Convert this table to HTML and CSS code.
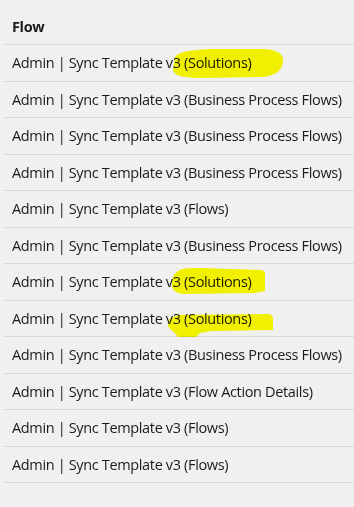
FILE: index.html
```html
<!DOCTYPE html>
<html lang="en">
<head>
<meta charset="utf-8">
<title>Flow</title>
<link rel="stylesheet" href="styles.css">
</head>
<body>
<div class="table">
  <div class="row head">Flow</div>
  <div class="row">Admin | Sync Template v3 (Solutions)</div>
  <div class="row">Admin | Sync Template v3 (Business Process Flows)</div>
  <div class="row">Admin | Sync Template v3 (Business Process Flows)</div>
  <div class="row">Admin | Sync Template v3 (Business Process Flows)</div>
  <div class="row">Admin | Sync Template v3 (Flows)</div>
  <div class="row">Admin | Sync Template v3 (Business Process Flows)</div>
  <div class="row">Admin | Sync Template v3 (Solutions)</div>
  <div class="row">Admin | Sync Template v3 (Solutions)</div>
  <div class="row">Admin | Sync Template v3 (Business Process Flows)</div>
  <div class="row">Admin | Sync Template v3 (Flow Action Details)</div>
  <div class="row">Admin | Sync Template v3 (Flows)</div>
  <div class="row">Admin | Sync Template v3 (Flows)</div>
</div>
<svg class="marks" width="354" height="507" viewBox="0 0 354 507" aria-hidden="true">
  <path d="M175,57 C178,52 190,50 210,49 L262,49 C275,49 283,53 283,60 C283,70 276,76 262,77 L200,78 C185,78 174,76 173,70 Z"/>
  <path d="M177,272 C180,268 190,268 200,268 L262,270 L265,272 L265,291 L255,293 L185,294 C176,294 171,290 172,283 C172,278 174,274 177,272 Z"/>
  <path d="M178,315 L270,314 L273,317 L273,330 L212,331 L200,333 L196,337 L178,337 C176,333 170,330 168,326 L169,319 Z"/>
</svg>
</body>
</html>
```
FILE: styles.css
```css
html, body {
  margin: 0;
  padding: 0;
  background: #f0f0f0;
}
body {
  width: 354px;
  height: 507px;
  overflow: hidden;
  font-family: "Open Sans", "Noto Sans", sans-serif;
  font-size: 14.5px;
  letter-spacing: -0.35px;
  color: #1b1b1b;
}
.table {
  display: flex;
  flex-direction: column;
  padding-left: 4px;
}
.row {
  display: flex;
  align-items: center;
  height: 35.5px;
  padding-left: 8px;
  border-bottom: 1px solid #dadada;
  white-space: nowrap;
}
.head {
  box-sizing: border-box;
  height: 45px;
  padding-top: 9px;
  font-weight: 700;
}
.marks {
  position: absolute;
  left: 0;
  top: 0;
  mix-blend-mode: multiply;
  pointer-events: none;
}
.marks path {
  fill: #ffff00;
}
```
